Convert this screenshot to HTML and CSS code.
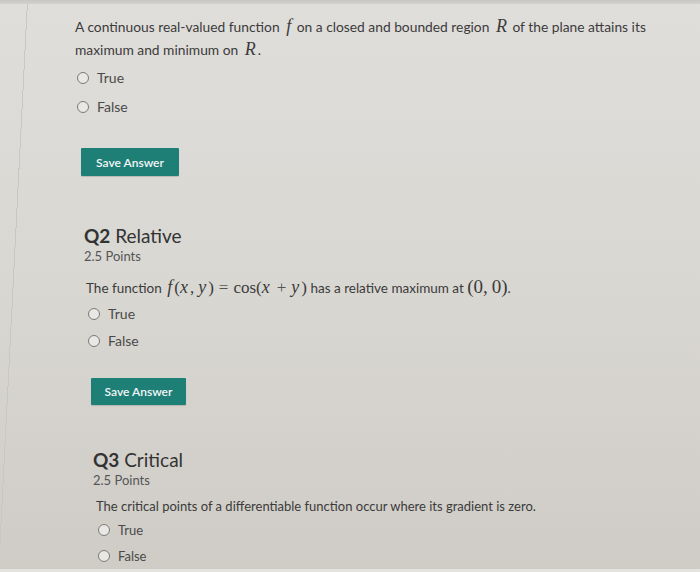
FILE: index.html
```html
<!DOCTYPE html>
<html>
<head>
<meta charset="utf-8">
<link rel="stylesheet" href="styles.css">
</head>
<body>
<div class="topbar"></div>
<main class="page">
  <section class="q q1">
    <p class="prompt">A continuous real-valued function <span class="m">f</span> on a closed and bounded region <span class="m">R</span> of the plane attains its maximum and minimum on <span class="m">R</span>.</p>
    <div class="opts">
      <label class="opt"><span class="radio"></span>True</label>
      <label class="opt"><span class="radio"></span>False</label>
    </div>
    <button class="save s1">Save Answer</button>
  </section>

  <section class="q q2">
    <h2 class="title"><b>Q2</b> Relative</h2>
    <div class="pts">2.5 Points</div>
    <p class="prompt p2">The function <span class="math"><span class="m">f</span><span class="mr">(</span><span class="m">x</span><span class="mr">,</span><span class="m sp">y</span><span class="mr">)</span><span class="mr op">=</span><span class="mr">cos(</span><span class="m">x</span><span class="mr op">+</span><span class="m">y</span><span class="mr">)</span></span> has a relative maximum at <span class="mr big">(0,&#8201;0)</span>.</p>
    <div class="opts o2">
      <label class="opt"><span class="radio"></span>True</label>
      <label class="opt"><span class="radio"></span>False</label>
    </div>
    <button class="save s2">Save Answer</button>
  </section>

  <section class="q q3">
    <h2 class="title"><b>Q3</b> Critical</h2>
    <div class="pts">2.5 Points</div>
    <p class="prompt p3">The critical points of a differentiable function occur where its gradient is zero.</p>
    <div class="opts o3">
      <label class="opt"><span class="radio"></span>True</label>
      <label class="opt"><span class="radio"></span>False</label>
    </div>
  </section>
</main>
<div class="bottombar"></div>
</body>
</html>
```
FILE: styles.css
```css
html, body {
  margin: 0;
  padding: 0;
}
body {
  width: 700px;
  height: 572px;
  overflow: hidden;
  font-family: Lato, "Open Sans", sans-serif;
  color: #3a3a3a;
  background:
    linear-gradient(92.9deg, transparent 0, transparent 27px, #c9c7c3 27px, #c9c7c3 28px, transparent 28px),
    linear-gradient(180deg, #e0dedb 0%, #d9d7d2 50%, #cfccc6 100%);
  display: flex;
  flex-direction: column;
}
.topbar {
  height: 4px;
  background: linear-gradient(180deg, #c8c7c4, #d2d1ce);
  flex: none;
}
.bottombar {
  height: 3px;
  background: #e6e4e0;
  flex: none;
  margin-top: auto;
}
.page {
  padding-left: 75px;
  flex: 1;
}
p { margin: 0; }
.q1 { padding-top: 11px; }
.prompt {
  font-size: 14px;
  line-height: 23px;
  width: 595px;
  color: #3b3b3b;
  letter-spacing: 0;
}
.q1 .prompt { font-size: 13.8px; }
.m {
  font-family: "Liberation Serif", "DejaVu Serif", serif;
  font-style: italic;
  font-size: 18px;
  letter-spacing: 0;
  margin: 0 2px 0 3px;
}
.mr {
  font-family: "Liberation Serif", "DejaVu Serif", serif;
  font-size: 17px;
  letter-spacing: 0;
}
.math { margin-left: 2px; }
.math .m { margin: 0 2px 0 0; }
.math .sp { margin-left: 4px; }
.op { margin: 0 5px; color: #555; }
.big { font-size: 19px; }
.opts {
  display: flex;
  flex-direction: column;
  margin-top: 7px;
  gap: 10px;
}
.opt {
  display: flex;
  align-items: center;
  font-size: 14px;
  color: #4a4a4a;
  height: 19px;
  margin-left: 2px;
}
.radio {
  width: 10px;
  height: 10px;
  border: 1.6px solid #7a7a7a;
  border-radius: 50%;
  margin-right: 8px;
  background: #e9e8e5;
}
.save {
  display: block;
  background: #1e7f77;
  color: #f3f6f5;
  border: none;
  border-radius: 1px;
  font-family: Lato, "Open Sans", sans-serif;
  font-size: 12px;
  font-weight: 600;
  padding: 0;
  width: 98px;
  height: 28px;
  box-shadow: 0 1px 1px rgba(0,0,0,0.15);
}
.s1 { margin-top: 32px; margin-left: 6px; }
.q2 { margin-left: 9px; padding-top: 48px; }
.title {
  margin: 0;
  font-size: 19px;
  font-weight: 400;
  line-height: 24px;
  color: #333;
}
.title b { font-weight: 700; }
.pts {
  font-size: 13px;
  color: #555;
  line-height: 16px;
}
.p2 { margin-top: 11px; margin-left: 2px; font-size: 13.5px; }
.o2 { margin-left: 2px; margin-top: 4px; gap: 8px; }
.s2 { margin-top: 28px; margin-left: 7px; width: 95px; height: 27px; }
.q3 { margin-left: 18px; padding-top: 43px; }
.p3 { margin-top: 7px; margin-left: 3px; font-size: 13px; }
.o3 { margin-left: 3px; margin-top: 2px; gap: 7px; }
.o3 .opt { font-size: 13px; }
```
